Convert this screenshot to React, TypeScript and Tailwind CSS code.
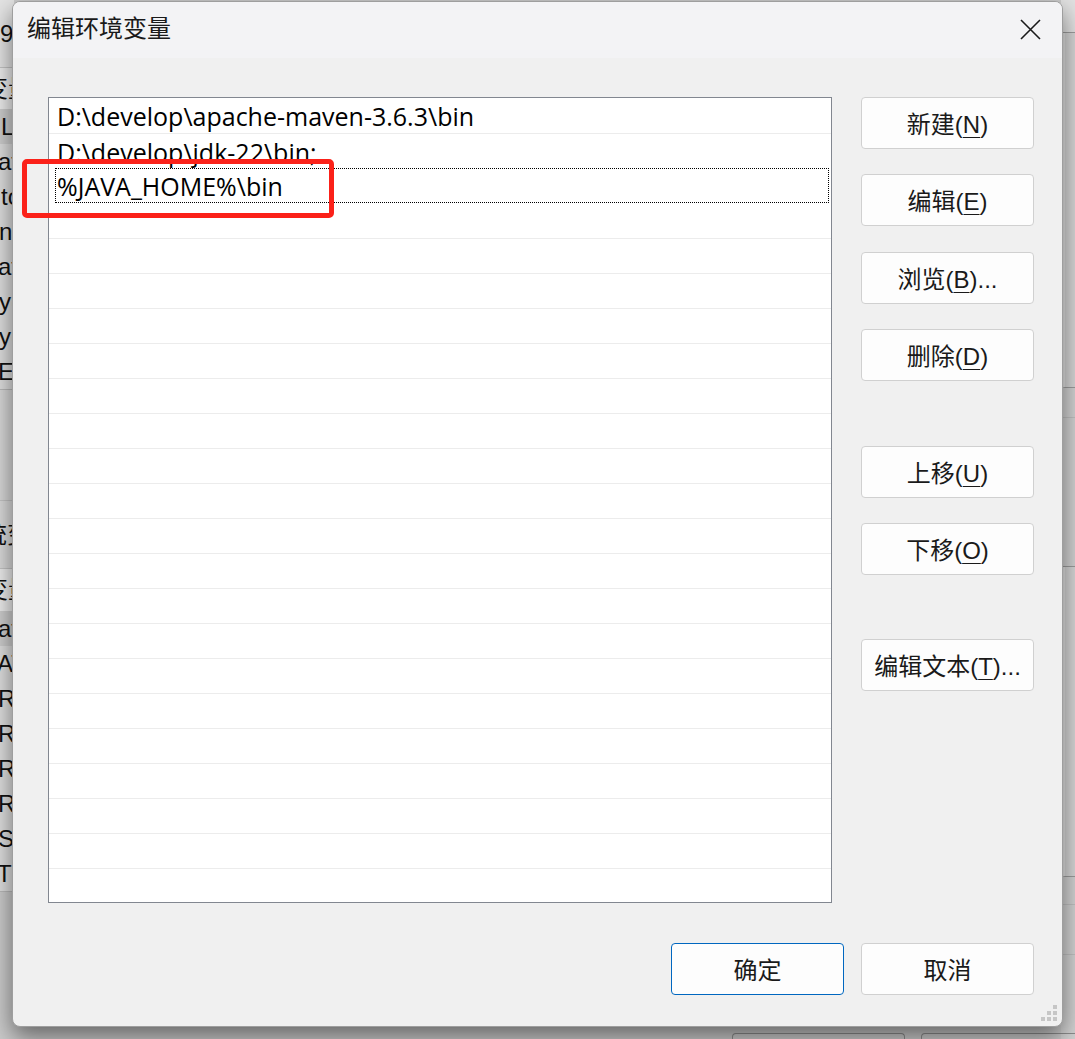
const FONT = "font-['Liberation_Sans','Noto_Sans_CJK_SC',sans-serif]";
const LIST_FONT = "font-['Open_Sans','Noto_Sans',sans-serif]";

type StripRow = { h: number; text?: string; shift?: number; cls: string };

// fragments of the parent window that peek out left of the dialog
const leftStrip: StripRow[] = [
  { h: 68, text: '9', shift: 0, cls: 'bg-[#e4e4e4] border-b border-[#c4c4c4]' },
  { h: 41, text: '变量', shift: -16, cls: 'bg-[#ececec]' },
  { h: 35, text: 'Li', shift: 1, cls: 'bg-[#cdcdcd]' },
  { h: 35, text: 'at', shift: -2, cls: 'bg-[#dedede]' },
  { h: 35, text: 'to', shift: 1, cls: 'bg-[#dedede]' },
  { h: 35, text: 'n', shift: -1, cls: 'bg-[#dedede]' },
  { h: 35, text: 'at', shift: -2, cls: 'bg-[#dedede]' },
  { h: 35, text: 'y(', shift: -1, cls: 'bg-[#dedede]' },
  { h: 35, text: 'y(', shift: -1, cls: 'bg-[#dedede]' },
  { h: 36, text: 'EN', shift: -2, cls: 'bg-[#dedede] border-b border-[#b9b9b9]' },
  { h: 111, cls: 'bg-[#d8d8d8] border-b border-[#c4c4c4]' },
  { h: 68, text: '统变', shift: -17, cls: 'bg-[#dadada] border-b border-[#c4c4c4]' },
  { h: 42, text: '变量', shift: -16, cls: 'bg-[#ececec]' },
  { h: 35, text: 'at', shift: -2, cls: 'bg-[#cdcdcd]' },
  { h: 35, text: 'AT', shift: -3, cls: 'bg-[#dedede]' },
  { h: 35, text: 'R(', shift: -2, cls: 'bg-[#dedede]' },
  { h: 35, text: 'R(', shift: -2, cls: 'bg-[#dedede]' },
  { h: 35, text: 'R(', shift: -2, cls: 'bg-[#dedede]' },
  { h: 35, text: 'R(', shift: -2, cls: 'bg-[#dedede]' },
  { h: 35, text: 'SI', shift: -2, cls: 'bg-[#dedede]' },
  { h: 36, text: 'T8', shift: -3, cls: 'bg-[#dedede] border-b border-[#b9b9b9]' },
];

function ParentWindow() {
  return (
    <div className="absolute inset-0 flex">
      <div className="flex w-[14px] flex-col overflow-hidden">
        {leftStrip.map((r, i) => (
          <div
            key={i}
            className={`flex shrink-0 items-center overflow-visible whitespace-nowrap text-[24px] leading-none text-[#111] ${r.cls}`}
            style={{ height: r.h }}
          >
            {r.text && <span style={{ marginLeft: r.shift }}>{r.text}</span>}
          </div>
        ))}
      </div>
      <div className="flex-1" />
      <div className="flex w-[14px] flex-col bg-[#d2d2d2]">
        <div className="h-[33px] shrink-0 border-b border-[#9c9c9c] bg-[#e2e2e2]" />
        <div className="h-[355px] shrink-0 border-b border-[#9c9c9c] border-l-[4px] border-l-[#e4e4e4] bg-[#d6d6d6]" />
        <div className="h-[30px] shrink-0 border-b border-[#c0c0c0]" />
        <div className="h-[149px] shrink-0 border-b border-[#9c9c9c]" />
        <div className="h-[310px] shrink-0 border-b border-[#9c9c9c] border-l-[4px] border-l-[#e4e4e4] bg-[#d6d6d6]" />
        <div className="h-[28px] shrink-0 border-b border-[#c0c0c0]" />
        <div className="h-[50px] shrink-0 border-b border-[#c0c0c0]" />
      </div>
      <div className="absolute bottom-0 left-[732px] h-[6px] w-[173px] rounded-t-[4px] border border-b-0 border-[#8d8d8d]" />
      <div className="absolute bottom-0 left-[921px] h-[6px] w-[173px] rounded-t-[4px] border border-b-0 border-[#8d8d8d]" />
    </div>
  );
}

function Btn({ label, mnemonic, suffix, primary, className = '' }: { label: string; mnemonic?: string; suffix?: string; primary?: boolean; className?: string }) {
  return (
    <button
      className={`flex h-[52px] w-[173px] shrink-0 items-center justify-center rounded-[4px] border bg-[#fdfdfd] pt-[3px] text-[24px] leading-none text-[#1a1a1a] ${
        primary ? 'border-[#0067c0]' : 'border-[#d0d0d0]'
      } ${className}`}
    >
      {label}
      {mnemonic && (
        <>
          (<span className="underline decoration-1 underline-offset-[4px]">{mnemonic}</span>)
        </>
      )}
      {suffix}
    </button>
  );
}

const entries = ['D:\\develop\\apache-maven-3.6.3\\bin', 'D:\\develop\\jdk-22\\bin;', '%JAVA_HOME%\\bin'];

export default function App() {
  const rows = Array.from({ length: 23 }, (_, i) => entries[i] ?? '');

  return (
    <div className={`relative h-[1039px] w-[1075px] overflow-hidden bg-[#cbcbcb] ${FONT}`}>
      <ParentWindow />

      <div className="absolute left-[12px] top-[1px] flex h-[1026px] w-[1051px] flex-col overflow-hidden rounded-[8px] border border-[#9e9e9e] bg-[#f0f0f0] shadow-[0_10px_24px_rgba(0,0,0,0.5)]">
        {/* title bar */}
        <div className="flex h-[56px] shrink-0 items-center justify-between bg-[#f3f3f5]">
          <span className="pb-[3px] pl-[14px] text-[24px] leading-none text-[#1a1a1a]">编辑环境变量</span>
          <div className="flex h-full w-[64px] items-center justify-center pb-[2px]">
            <svg width="21" height="21" viewBox="0 0 21 21">
              <path d="M1 1 L20 20 M20 1 L1 20" stroke="#1a1a1a" strokeWidth="1.6" />
            </svg>
          </div>
        </div>

        {/* body */}
        <div className="flex shrink-0 pl-[35px] pr-[28px] pt-[39px]">
          <div className={`flex h-[806px] w-[784px] shrink-0 flex-col overflow-hidden border border-[#828790] bg-white ${LIST_FONT}`}>
            {rows.map((text, i) =>
              i === 2 ? (
                <div key={i} className="flex h-[35px] shrink-0 pl-[6px] pr-[2px]">
                  <div className="flex flex-1 items-center whitespace-nowrap border border-dotted border-black pl-px pt-[2px] text-[25px] leading-none text-black">
                    {text}
                  </div>
                </div>
              ) : (
                <div
                  key={i}
                  className={`flex h-[35px] shrink-0 items-center whitespace-nowrap pl-[8px] pt-[2px] text-[25px] leading-none text-black ${
                    i > 0 && i !== 3 ? 'border-t border-[#ececec]' : ''
                  }`}
                >
                  {text}
                </div>
              )
            )}
          </div>

          <div className="ml-[29px] flex flex-col">
            <Btn label="新建" mnemonic="N" />
            <Btn label="编辑" mnemonic="E" className="mt-[25px]" />
            <Btn label="浏览" mnemonic="B" suffix="..." className="mt-[26px]" />
            <Btn label="删除" mnemonic="D" className="mt-[25px]" />
            <Btn label="上移" mnemonic="U" className="mt-[65px]" />
            <Btn label="下移" mnemonic="O" className="mt-[25px]" />
            <Btn label="编辑文本" mnemonic="T" suffix="..." className="mt-[64px]" />
          </div>
        </div>

        {/* footer */}
        <div className="flex shrink-0 justify-end gap-[17px] pr-[28px] pt-[40px]">
          <Btn label="确定" primary />
          <Btn label="取消" />
        </div>

        <svg className="absolute bottom-[4px] right-[4px]" width="17" height="17" viewBox="0 0 17 17">
          <rect x="12" y="0" width="4" height="4" fill="#c6c6c6" />
          <rect x="6" y="6" width="4" height="4" fill="#c6c6c6" />
          <rect x="12" y="6" width="4" height="4" fill="#c6c6c6" />
          <rect x="0" y="12" width="4" height="4" fill="#c6c6c6" />
          <rect x="6" y="12" width="4" height="4" fill="#c6c6c6" />
          <rect x="12" y="12" width="4" height="4" fill="#c6c6c6" />
        </svg>
      </div>

      {/* annotation box */}
      <div className="absolute left-[22px] top-[159px] h-[59px] w-[312px] rounded-[5px] border-[5px] border-[#fb2119]" />
    </div>
  );
}
